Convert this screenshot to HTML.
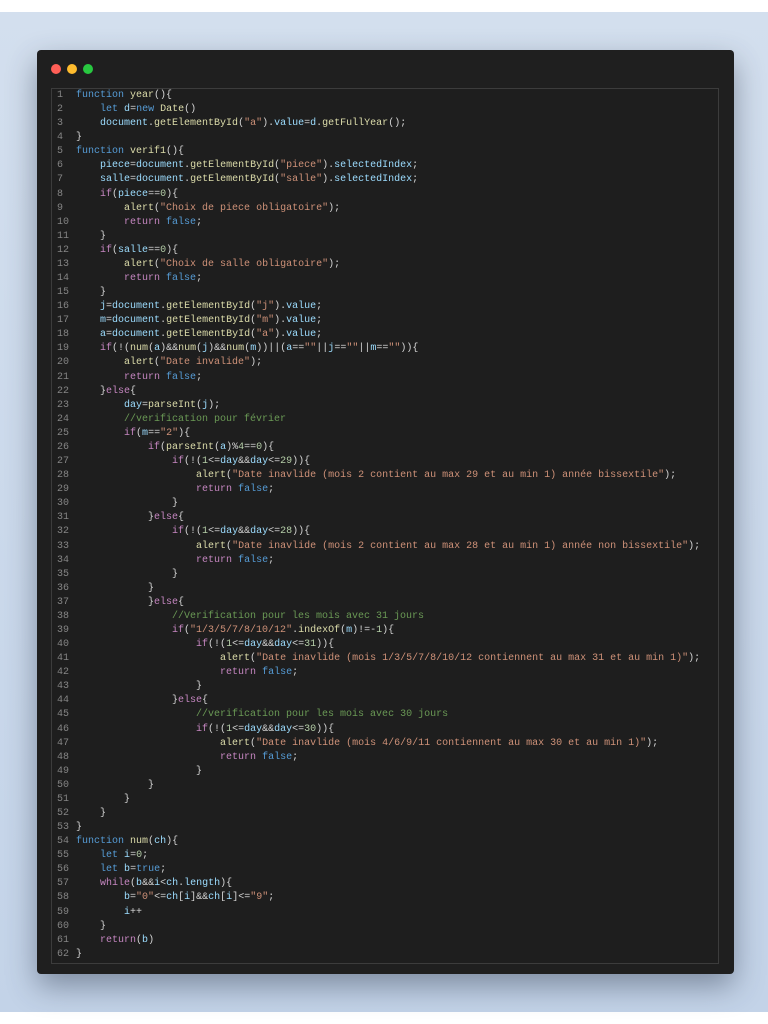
<!DOCTYPE html>
<html><head><meta charset="utf-8"><style>
html,body{margin:0;padding:0}
body{width:768px;height:1024px;background:#fff;position:relative;overflow:hidden}
.bg{position:absolute;left:0;top:12px;width:768px;height:1000px;background:linear-gradient(180deg,#d3dfee,#c3d3e8)}
.win{position:absolute;left:37px;top:50px;width:697px;height:924px;background:#1f1f1f;border-radius:4px;box-shadow:0 12px 30px rgba(40,50,70,.45)}
.dot{position:absolute;top:14px;width:10px;height:10px;border-radius:50%}
.box{position:absolute;left:14px;top:38px;width:666px;height:874px;border:1px solid #3c3c3c;background:#1e1e1e}
pre{margin:0;position:absolute;left:0;top:0px;font:10px/14.08px "Liberation Mono",monospace;color:#d4d4d4}
.ln{position:absolute;left:5px;top:0px;font:10px/14.08px "Liberation Mono",monospace;color:#858585;margin:0}
.k{color:#569cd6}.f{color:#dcdcaa}.s{color:#ce9178}.c{color:#c586c0}.v{color:#9cdcfe}.n{color:#b5cea8}.g{color:#6a9955}
</style></head><body>
<div class="bg"></div>
<div class="win">
<div class="dot" style="left:14px;background:#ff5f57"></div>
<div class="dot" style="left:30px;background:#febc2e"></div>
<div class="dot" style="left:46px;background:#28c840"></div>
<div class="box">
<pre class="ln">1
2
3
4
5
6
7
8
9
10
11
12
13
14
15
16
17
18
19
20
21
22
23
24
25
26
27
28
29
30
31
32
33
34
35
36
37
38
39
40
41
42
43
44
45
46
47
48
49
50
51
52
53
54
55
56
57
58
59
60
61
62</pre>
<pre style="left:24px"><span class="k">function</span> <span class="f">year</span>(){
    <span class="k">let</span> <span class="v">d</span>=<span class="k">new</span> <span class="f">Date</span>()
    <span class="v">document</span>.<span class="f">getElementById</span>(<span class="s">"a"</span>).<span class="v">value</span>=<span class="v">d</span>.<span class="f">getFullYear</span>();
}
<span class="k">function</span> <span class="f">verif1</span>(){
    <span class="v">piece</span>=<span class="v">document</span>.<span class="f">getElementById</span>(<span class="s">"piece"</span>).<span class="v">selectedIndex</span>;
    <span class="v">salle</span>=<span class="v">document</span>.<span class="f">getElementById</span>(<span class="s">"salle"</span>).<span class="v">selectedIndex</span>;
    <span class="c">if</span>(<span class="v">piece</span>==<span class="n">0</span>){
        <span class="f">alert</span>(<span class="s">"Choix de piece obligatoire"</span>);
        <span class="c">return</span> <span class="k">false</span>;
    }
    <span class="c">if</span>(<span class="v">salle</span>==<span class="n">0</span>){
        <span class="f">alert</span>(<span class="s">"Choix de salle obligatoire"</span>);
        <span class="c">return</span> <span class="k">false</span>;
    }
    <span class="v">j</span>=<span class="v">document</span>.<span class="f">getElementById</span>(<span class="s">"j"</span>).<span class="v">value</span>;
    <span class="v">m</span>=<span class="v">document</span>.<span class="f">getElementById</span>(<span class="s">"m"</span>).<span class="v">value</span>;
    <span class="v">a</span>=<span class="v">document</span>.<span class="f">getElementById</span>(<span class="s">"a"</span>).<span class="v">value</span>;
    <span class="c">if</span>(!(<span class="f">num</span>(<span class="v">a</span>)&amp;&amp;<span class="f">num</span>(<span class="v">j</span>)&amp;&amp;<span class="f">num</span>(<span class="v">m</span>))||(<span class="v">a</span>==<span class="s">""</span>||<span class="v">j</span>==<span class="s">""</span>||<span class="v">m</span>==<span class="s">""</span>)){
        <span class="f">alert</span>(<span class="s">"Date invalide"</span>);
        <span class="c">return</span> <span class="k">false</span>;
    }<span class="c">else</span>{
        <span class="v">day</span>=<span class="f">parseInt</span>(<span class="v">j</span>);
        <span class="g">//verification pour février</span>
        <span class="c">if</span>(<span class="v">m</span>==<span class="s">"2"</span>){
            <span class="c">if</span>(<span class="f">parseInt</span>(<span class="v">a</span>)%<span class="n">4</span>==<span class="n">0</span>){
                <span class="c">if</span>(!(<span class="n">1</span>&lt;=<span class="v">day</span>&amp;&amp;<span class="v">day</span>&lt;=<span class="n">29</span>)){
                    <span class="f">alert</span>(<span class="s">"Date inavlide (mois 2 contient au max 29 et au min 1) année bissextile"</span>);
                    <span class="c">return</span> <span class="k">false</span>;
                }
            }<span class="c">else</span>{
                <span class="c">if</span>(!(<span class="n">1</span>&lt;=<span class="v">day</span>&amp;&amp;<span class="v">day</span>&lt;=<span class="n">28</span>)){
                    <span class="f">alert</span>(<span class="s">"Date inavlide (mois 2 contient au max 28 et au min 1) année non bissextile"</span>);
                    <span class="c">return</span> <span class="k">false</span>;
                }
            }
            }<span class="c">else</span>{
                <span class="g">//Verification pour les mois avec 31 jours</span>
                <span class="c">if</span>(<span class="s">"1/3/5/7/8/10/12"</span>.<span class="f">indexOf</span>(<span class="v">m</span>)!=-<span class="n">1</span>){
                    <span class="c">if</span>(!(<span class="n">1</span>&lt;=<span class="v">day</span>&amp;&amp;<span class="v">day</span>&lt;=<span class="n">31</span>)){
                        <span class="f">alert</span>(<span class="s">"Date inavlide (mois 1/3/5/7/8/10/12 contiennent au max 31 et au min 1)"</span>);
                        <span class="c">return</span> <span class="k">false</span>;
                    }
                }<span class="c">else</span>{
                    <span class="g">//verification pour les mois avec 30 jours</span>
                    <span class="c">if</span>(!(<span class="n">1</span>&lt;=<span class="v">day</span>&amp;&amp;<span class="v">day</span>&lt;=<span class="n">30</span>)){
                        <span class="f">alert</span>(<span class="s">"Date inavlide (mois 4/6/9/11 contiennent au max 30 et au min 1)"</span>);
                        <span class="c">return</span> <span class="k">false</span>;
                    }
            }
        }
    }
}
<span class="k">function</span> <span class="f">num</span>(<span class="v">ch</span>){
    <span class="k">let</span> <span class="v">i</span>=<span class="n">0</span>;
    <span class="k">let</span> <span class="v">b</span>=<span class="k">true</span>;
    <span class="c">while</span>(<span class="v">b</span>&amp;&amp;<span class="v">i</span>&lt;<span class="v">ch</span>.<span class="v">length</span>){
        <span class="v">b</span>=<span class="s">"0"</span>&lt;=<span class="v">ch</span>[<span class="v">i</span>]&amp;&amp;<span class="v">ch</span>[<span class="v">i</span>]&lt;=<span class="s">"9"</span>;
        <span class="v">i</span>++
    }
    <span class="c">return</span>(<span class="v">b</span>)
}</pre>
</div>
</div>
</body></html>
